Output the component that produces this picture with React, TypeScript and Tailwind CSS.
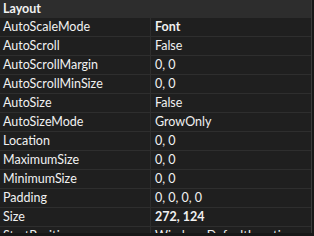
const rows: { name: string; value: string; bold?: boolean }[] = [
  { name: "AutoScaleMode", value: "Font", bold: true },
  { name: "AutoScroll", value: "False" },
  { name: "AutoScrollMargin", value: "0, 0" },
  { name: "AutoScrollMinSize", value: "0, 0" },
  { name: "AutoSize", value: "False" },
  { name: "AutoSizeMode", value: "GrowOnly" },
  { name: "Location", value: "0, 0" },
  { name: "MaximumSize", value: "0, 0" },
  { name: "MinimumSize", value: "0, 0" },
  { name: "Padding", value: "0, 0, 0, 0" },
  { name: "Size", value: "272, 124", bold: true },
  { name: "StartPosition", value: "WindowsDefaultLocation" },
];

export default function App() {
  return (
    <div
      className="flex h-[236px] w-[314px] flex-col overflow-hidden bg-[#171717] text-[12.5px] text-[#f1f1f1]"
      style={{ fontFamily: "Lato, 'Noto Sans', sans-serif" }}
    >
      <div className="flex h-[233px] w-[312px] flex-col overflow-hidden border-r border-[#3a3a3a] bg-[#1f1f1f]">
        <div className="flex h-[18px] shrink-0 items-center bg-[#2d2d2d] pl-[3px] font-bold">Layout</div>
        {rows.map((row) => (
          <div key={row.name} className="flex h-[19px] shrink-0 border-b border-[#2e2e2e] bg-[#1f1f1f]">
            <div className="flex w-[151px] items-center border-r border-[#2e2e2e] pl-[3px] leading-none">{row.name}</div>
            <div className={`flex flex-1 items-center pl-[4px] leading-none ${row.bold ? "font-bold" : ""}`}>{row.value}</div>
          </div>
        ))}
      </div>
    </div>
  );
}
